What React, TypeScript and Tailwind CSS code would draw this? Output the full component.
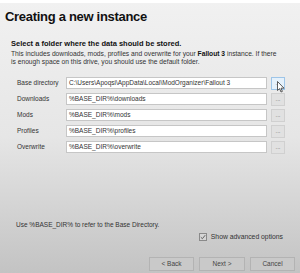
import React from 'react';

const rows = [
  { label: 'Base directory', value: 'C:\\Users\\Apoqsi\\AppData\\Local\\ModOrganizer\\Fallout 3', hover: true },
  { label: 'Downloads', value: '%BASE_DIR%\\downloads' },
  { label: 'Mods', value: '%BASE_DIR%\\mods' },
  { label: 'Profiles', value: '%BASE_DIR%\\profiles' },
  { label: 'Overwrite', value: '%BASE_DIR%\\overwrite' },
];

const Cursor = () => (
  <svg className="absolute left-[5px] top-[3px]" width="8" height="12" viewBox="0 0 8 12">
    <path d="M0.5 0.5 L0.5 9.5 L2.6 7.6 L4 11 L5.4 10.4 L4 7.2 L7 7.2 Z" fill="#fff" stroke="#333" strokeWidth="0.8" />
  </svg>
);

const App: React.FC = () => {
  return (
    <div
      className="w-[300px] h-[273px] flex flex-col overflow-hidden text-[#1c1c1c] bg-gradient-to-b from-[#f1f1f1] via-[#e6e6e6] to-[#c3c3c3]"
      style={{ fontFamily: '"Liberation Sans", Arial, sans-serif' }}
    >
      <div className="h-[3px] bg-white" />

      {/* Title */}
      <h1 className="mt-[6px] pl-[5px] text-[13px] leading-[16px] font-bold tracking-[-0.3px] text-[#111]">
        Creating a new instance
      </h1>

      {/* Section heading */}
      <div className="mt-[14px] px-[11px]">
        <h2 className="text-[7.5px] leading-[9px] font-bold text-[#111]">
          Select a folder where the data should be stored.
        </h2>
        <div className="mt-[2px] text-[6.7px] leading-[8px] text-[#333] whitespace-nowrap">
          <div>
            This includes downloads, mods, profiles and overwrite for your <b className="text-[#111]">Fallout 3</b> instance. If there
          </div>
          <div>is enough space on this drive, you should use the default folder.</div>
        </div>
      </div>

      {/* Directory rows */}
      <div className="mt-[11px] pl-[17px] pr-[15px] flex flex-col gap-[4px]">
        {rows.map((r) => (
          <div key={r.label} className="flex items-center h-[12px]">
            <span className="w-[49px] text-[6.5px] text-[#333] whitespace-nowrap">{r.label}</span>
            <div className="flex-1 h-[12px] bg-white border border-[#c6c6c6] flex items-center pl-[2px] text-[6.5px] text-[#333] whitespace-nowrap overflow-hidden">
              {r.value}
            </div>
            <div
              className={
                r.hover
                  ? 'relative ml-[4px] w-[14px] h-[13px] bg-[#e5f1fb] border border-[#9ec5e8] flex items-center justify-center text-[6px] text-[#666]'
                  : 'relative ml-[4px] w-[14px] h-[13px] bg-[#e1e1e1] border border-[#d0d0d0] flex items-center justify-center text-[6px] leading-none text-[#666]'
              }
            >
              ...
              {r.hover && <Cursor />}
            </div>
          </div>
        ))}
      </div>

      <div className="flex-1" />

      {/* Footer */}
      <p className="pl-[16px] text-[6.5px] leading-[8px] text-[#333]">
        Use %BASE_DIR% to refer to the Base Directory.
      </p>

      <div className="mt-[3px] flex items-center justify-end pr-[17px] gap-[4px]">
        <div className="w-[8px] h-[8px] border border-[#8a8a8a] bg-[#d6d6d6] flex items-center justify-center">
          <svg width="6" height="6" viewBox="0 0 6 6">
            <path d="M0.8 3.2 L2.4 4.7 L5.2 1.2" fill="none" stroke="#555" strokeWidth="0.9" />
          </svg>
        </div>
        <span className="text-[6.8px] text-[#333]">Show advanced options</span>
      </div>

      <div className="mt-[15px] mb-[2px] flex justify-end pr-[5px] gap-[5px]">
        <button className="w-[45px] h-[14px] bg-[#c9c9c9] border border-[#b3b3b3] text-[6.5px] text-[#444]">&lt; Back</button>
        <button className="w-[46px] h-[14px] bg-[#c9c9c9] border border-[#b3b3b3] text-[6.5px] text-[#444]">Next &gt;</button>
        <button className="w-[45px] h-[14px] bg-[#c9c9c9] border border-[#b3b3b3] text-[6.5px] text-[#444]">Cancel</button>
      </div>
    </div>
  );
};

export default App;
